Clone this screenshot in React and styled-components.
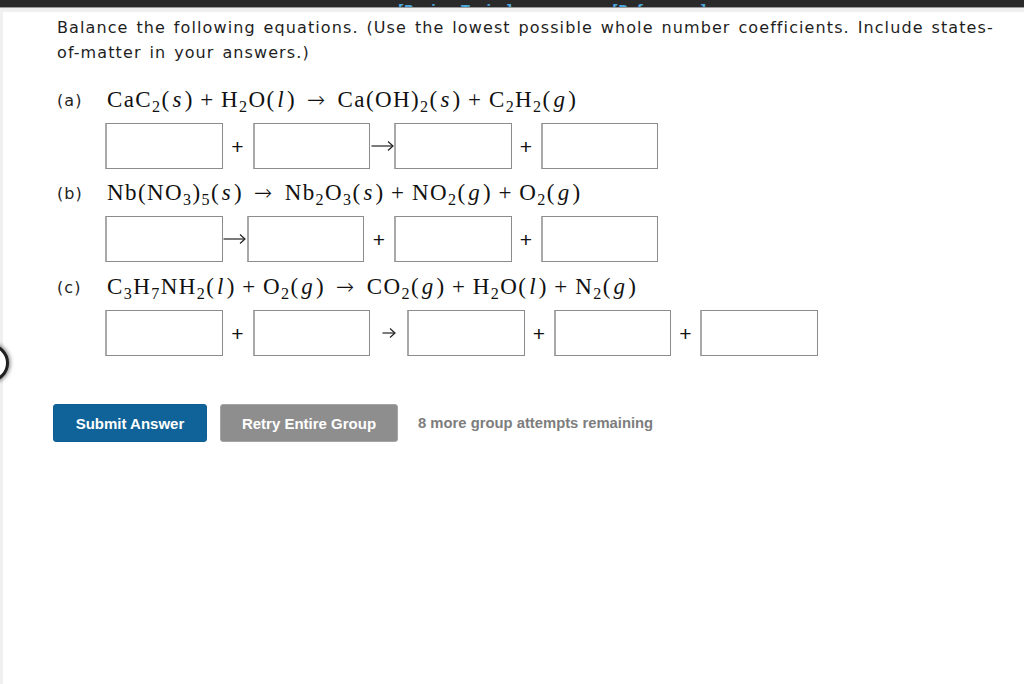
import React from 'react'
import styled, { createGlobalStyle } from 'styled-components'

const GlobalStyle = createGlobalStyle`
  html, body {
    margin: 0;
    padding: 0;
    background: #f0f0f0;
  }
  body {
    width: 1024px;
    height: 684px;
    overflow: hidden;
  }
`

const Page = styled.div`
  position: relative;
  width: 1024px;
  height: 684px;
  display: flex;
  flex-direction: column;
  background: #f0f0f0;
`

const TopBar = styled.div`
  height: 7px;
  background: #2a2a2a;
  border-bottom: 1px solid #9a9a9a;
  display: flex;
  align-items: flex-end;
  overflow: hidden;
`

const TopLink = styled.span`
  font-family: 'DejaVu Sans', sans-serif;
  font-weight: bold;
  font-size: 13px;
  line-height: 13px;
  color: #4aa8df;
  margin-left: ${p => p.left}px;
  margin-bottom: -9px;
  white-space: nowrap;
`

const Content = styled.main`
  flex: 1;
  margin: 4px 0 0 3px;
  background: #fff;
  padding: 3px 0 0 54px;
`

const Instructions = styled.p`
  margin: 0;
  width: 945px;
  font-family: 'DejaVu Sans', Verdana, sans-serif;
  font-size: 16px;
  letter-spacing: 1.1px;
  word-spacing: 1.7px;
  line-height: 25px;
  color: #1e1e1e;
`

const Question = styled.section`
  margin-top: ${p => p.top}px;
`

const EqLine = styled.div`
  display: flex;
  align-items: center;
  height: 30px;
`

const Label = styled.span`
  width: 50px;
  font-family: 'DejaVu Sans', Verdana, sans-serif;
  font-size: 16px;
  letter-spacing: 1.1px;
  color: #1e1e1e;
`

const Eq = styled.span`
  font-family: 'Liberation Serif', 'DejaVu Serif', serif;
  font-size: 23px;
  letter-spacing: 1.4px;
  color: #111;
  white-space: nowrap;

  sub {
    font-size: 0.7em;
    vertical-align: -0.28em;
    line-height: 0;
  }
  i {
    font-style: italic;
    margin: 0 0.08em;
  }
`

const Op = styled.span`
  display: inline-block;
  margin: 0 ${p => (p.wide ? 0.5 : 0.28)}em;
  font-family: ${p => (p.wide ? "'DejaVu Sans', sans-serif" : 'inherit')};
  font-size: ${p => (p.wide ? '0.95em' : '1em')};
  font-weight: ${p => (p.wide ? 300 : 'normal')};
`

const InputRow = styled.div`
  display: flex;
  align-items: center;
  margin: 8px 0 0 48px;
`

const Box = styled.input`
  box-sizing: border-box;
  width: 117.5px;
  height: 46px;
  margin: 0;
  padding: 0 6px;
  border: 1px solid #8c8c8c;
  border-left: 2px solid #a9a9a9;
  background: #fff;
  font-size: 16px;
`

const Plus = styled.span`
  width: ${p => p.w || 30}px;
  text-align: center;
  font-family: 'Liberation Sans', Arial, sans-serif;
  font-size: 21px;
  line-height: 1;
  color: #111;
`

const ArrowSlot = styled.span`
  width: ${p => (p.wide ? 37 : 24)}px;
  display: flex;
  justify-content: center;
  align-items: center;
  color: #222;
`

const ArrowIcon = ({ length }) => (
  <svg width={length} height="12" viewBox={`0 0 ${length} 12`} fill="none" stroke="currentColor" strokeWidth="1.2">
    <path d={`M0.5 6 H${length - 1}`} />
    <path d={`M${length - 6} 1.5 L${length - 1} 6 L${length - 6} 10.5`} />
  </svg>
)

const ButtonRow = styled.div`
  display: flex;
  align-items: center;
  gap: 13px;
  margin: 48px 0 0 -4px;
`

const Button = styled.button`
  box-sizing: border-box;
  width: ${p => p.w}px;
  height: 38px;
  padding: 0;
  border-radius: 3px;
  border: 1px solid ${p => (p.muted ? '#a4a4a4' : '#0d5e92')};
  background: ${p => (p.muted ? '#8e8e8e' : '#0f6398')};
  color: #fff;
  font-family: 'Liberation Sans', Arial, sans-serif;
  font-weight: bold;
  font-size: 15px;
  cursor: pointer;
`

const Remaining = styled.span`
  margin-left: 7px;
  font-family: 'Liberation Sans', Arial, sans-serif;
  font-weight: bold;
  font-size: 14.8px;
  color: #7d7d7d;
`

const SideKnob = styled.div`
  position: absolute;
  left: -29px;
  top: 344px;
  width: 32px;
  height: 32px;
  border: 3px solid #1f1f1f;
  border-radius: 50%;
  background: #fff;
  box-shadow: 0 0 4px 1px rgba(0, 0, 0, 0.55);
`

const questions = [
  {
    label: '(a)',
    top: 20,
    eq: (
      <>
        CaC<sub>2</sub>(<i>s</i>)<Op>+</Op>H<sub>2</sub>O(<i>l</i>)<Op wide>→</Op>Ca(OH)<sub>2</sub>(<i>s</i>)<Op>+</Op>C<sub>2</sub>H<sub>2</sub>(<i>g</i>)
      </>
    ),
    parts: ['box', 'plus', 'box', 'arrow', 'box', 'plus', 'box'],
  },
  {
    label: '(b)',
    top: 9,
    eq: (
      <>
        Nb(NO<sub>3</sub>)<sub>5</sub>(<i>s</i>)<Op wide>→</Op>Nb<sub>2</sub>O<sub>3</sub>(<i>s</i>)<Op>+</Op>NO<sub>2</sub>(<i>g</i>)<Op>+</Op>O<sub>2</sub>(<i>g</i>)
      </>
    ),
    parts: ['box', 'arrow', 'box', 'plus', 'box', 'plus', 'box'],
  },
  {
    label: '(c)',
    top: 10,
    eq: (
      <>
        C<sub>3</sub>H<sub>7</sub>NH<sub>2</sub>(<i>l</i>)<Op>+</Op>O<sub>2</sub>(<i>g</i>)<Op wide>→</Op>CO<sub>2</sub>(<i>g</i>)<Op>+</Op>H<sub>2</sub>O(<i>l</i>)<Op>+</Op>N<sub>2</sub>(<i>g</i>)
      </>
    ),
    parts: ['box', 'plus', 'box', 'wideArrow', 'box', 'plus', 'box', 'plus', 'box'],
  },
]

const renderPart = (part, i) => {
  if (part === 'box') return <Box key={i} type="text" aria-label="coefficient" />
  if (part === 'plus') return <Plus key={i} w={i > 4 ? 29 : 30}>+</Plus>
  if (part === 'arrow')
    return (
      <ArrowSlot key={i}>
        <ArrowIcon length={23} />
      </ArrowSlot>
    )
  return (
    <ArrowSlot key={i} wide>
      <ArrowIcon length={14} />
    </ArrowSlot>
  )
}

const App = () => {
  return (
    <Page>
      <GlobalStyle />
      <TopBar>
        <TopLink left={398}>[Review Topics]</TopLink>
        <TopLink left={100}>[References]</TopLink>
      </TopBar>
      <Content>
        <Instructions>
          Balance the following equations. (Use the lowest possible whole number coefficients. Include states-of-matter in your answers.)
        </Instructions>
        {questions.map(q => (
          <Question key={q.label} top={q.top}>
            <EqLine>
              <Label>{q.label}</Label>
              <Eq>{q.eq}</Eq>
            </EqLine>
            <InputRow>{q.parts.map(renderPart)}</InputRow>
          </Question>
        ))}
        <ButtonRow>
          <Button w={154}>Submit Answer</Button>
          <Button muted w={178}>Retry Entire Group</Button>
          <Remaining>8 more group attempts remaining</Remaining>
        </ButtonRow>
      </Content>
      <SideKnob />
    </Page>
  )
}

export default App
